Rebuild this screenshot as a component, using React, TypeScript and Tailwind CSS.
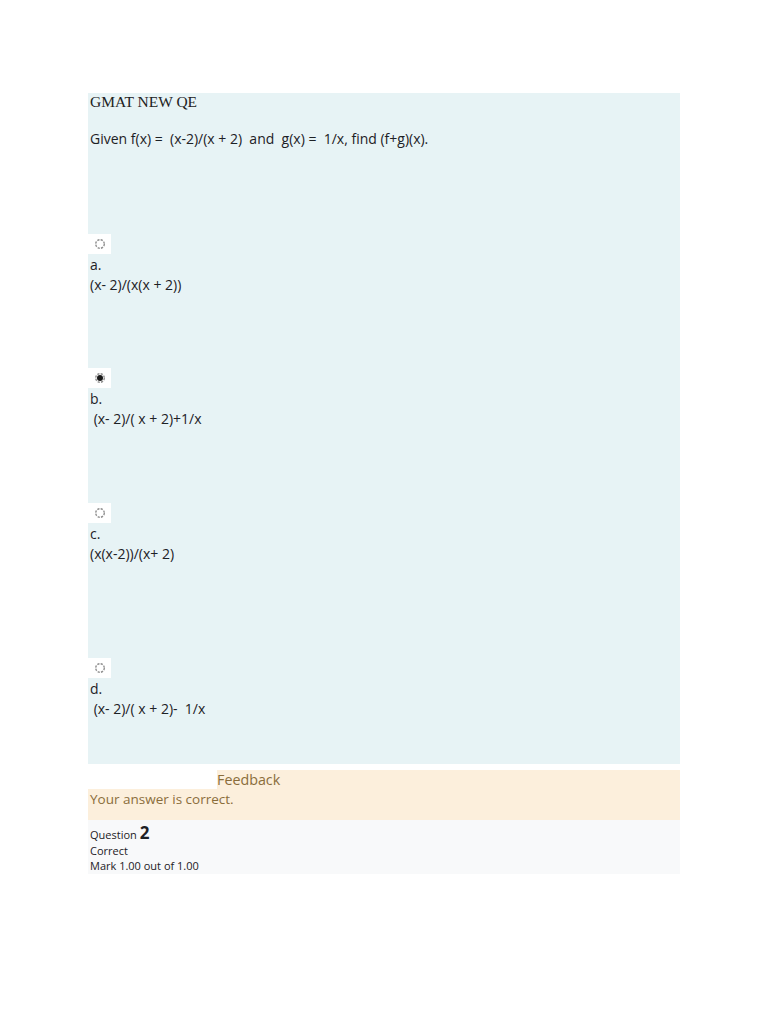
import React from "react";

const OPTIONS = [
  { letter: "a.", text: "(x- 2)/(x(x + 2))", checked: false, gap: "mt-[85px]" },
  { letter: "b.", text: "\u00a0(x- 2)/( x + 2)+1/x", checked: true, gap: "mt-[73px]" },
  { letter: "c.", text: "(x(x-2))/(x+ 2)", checked: false, gap: "mt-[74px]" },
  { letter: "d.", text: "\u00a0(x- 2)/( x + 2)-  1/x", checked: false, gap: "mt-[94px]" },
];

function Radio({ checked }: { checked: boolean }) {
  return (
    <div className="flex h-[20px] w-[23px] items-center justify-center bg-white">
      <svg width="12" height="12" viewBox="0 0 12 12">
        <circle cx="6" cy="6" r="4.3" fill="none" stroke="#8f8f8f" strokeWidth="1.4" strokeDasharray="2.2 1.2" />
        {checked && <circle cx="6" cy="6" r="3" fill="#1a1a1a" />}
      </svg>
    </div>
  );
}

export default function App() {
  return (
    <div className="min-h-[1024px] w-[768px] bg-white pt-[93px] font-['Open_Sans',sans-serif] text-[#1d2125]">
      <div className="mx-[88px] w-[592px]">
        {/* ── Question box ─────────────────────────────── */}
        <div className="h-[671px] bg-[#e7f3f5] pl-[2px]">
          <div className="pt-[1px] font-['Liberation_Serif',serif] text-[15.5px] leading-[16px] text-[#222]">
            GMAT NEW QE
          </div>
          <div className="mt-[19px] whitespace-pre text-[14px] leading-[20px]">
            Given f(x) =  (x-2)/(x + 2)  and  g(x) =  1/x, find (f+g)(x).
          </div>

          {OPTIONS.map((o) => (
            <div key={o.letter} className={o.gap}>
              <div className="-ml-[2px]">
                <Radio checked={o.checked} />
              </div>
              <div className="mt-[1px] text-[14px] leading-[20px]">{o.letter}</div>
              <div className="whitespace-pre text-[14px] leading-[20px]">{o.text}</div>
            </div>
          ))}
        </div>

        {/* ── Feedback ─────────────────────────────────── */}
        <div className="mt-[6px] text-[#8a6d3b]">
          <div className="flex">
            <div className="w-[129px] bg-white" />
            <div className="flex-1 bg-[#fcefdc] text-[14.3px] leading-[19px]">Feedback</div>
          </div>
          <div className="h-[31px] bg-[#fcefdc] pl-[2px] text-[13.5px] leading-[20px]">
            Your answer is correct.
          </div>
        </div>

        {/* ── Question 2 info ──────────────────────────── */}
        <div className="h-[54px] bg-[#f8f9fa] pl-[2px] pt-[4px] text-[11px] leading-[16px]">
          <div className="flex items-baseline gap-[3px]">
            <span>Question</span>
            <span className="text-[17px] font-bold leading-[18px]">2</span>
          </div>
          <div>Correct</div>
          <div className="leading-[14px]">Mark 1.00 out of 1.00</div>
        </div>
      </div>
    </div>
  );
}
